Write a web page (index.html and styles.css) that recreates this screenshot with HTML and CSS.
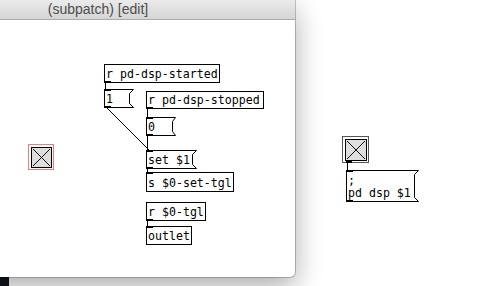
FILE: index.html
```html
<!DOCTYPE html>
<html lang="en">
  <head>
    <meta charset="UTF-8" />
    <meta name="viewport" content="width=device-width, initial-scale=1.0" />
    <title>pd patch</title>
    <link rel="stylesheet" href="styles.css">
  </head>
  <body>
    <div class="desktop">
      <!-- main patch canvas, sits behind the subpatch window -->
      <svg class="patch main-patch" width="477" height="286" viewBox="0 0 477 286">
        <rect class="tgl-frame" x="342.5" y="136.5" width="26" height="26" />
        <rect class="tgl" x="345.5" y="139.5" width="21" height="21" />
        <line class="tgl-x" x1="347" y1="141" x2="365" y2="159" />
        <line class="tgl-x" x1="365" y1="141" x2="347" y2="159" />
        <rect class="iolet" x="346" y="160" width="6" height="3" />

        <line class="cord" x1="347.5" y1="163" x2="347.5" y2="170" />

        <polygon class="box" points="346.5,170.5 418.5,170.5 414.5,174.5 414.5,197.5 418.5,201.5 346.5,201.5" />
        <text class="label" x="348" y="184">;</text>
        <text class="label" x="348" y="197">pd dsp $1</text>
        <rect class="iolet" x="346" y="170" width="7" height="2" />
        <rect class="iolet" x="346" y="200" width="7" height="2" />
      </svg>

      <div class="dock-tile"></div>

      <div class="window">
        <div class="titlebar">(subpatch) [edit]</div>
        <div class="canvas">
          <svg class="patch" width="394" height="257" viewBox="-99 20 394 257">
            <!-- cords -->
            <line class="cord" x1="105.5" y1="83" x2="105.5" y2="89" />
            <line class="cord" x1="107" y1="108" x2="149" y2="150" />
            <line class="cord" x1="147.5" y1="109" x2="147.5" y2="117" />
            <line class="cord" x1="147.5" y1="135" x2="147.5" y2="150" />
            <line class="cord" x1="147.5" y1="168" x2="147.5" y2="173" />
            <line class="cord" x1="147.5" y1="220" x2="147.5" y2="226" />

            <!-- r pd-dsp-started -->
            <rect class="box" x="104.5" y="64.5" width="115" height="18" />
            <text class="label" x="106" y="77.5">r pd-dsp-started</text>
            <rect class="iolet" x="104" y="81" width="7" height="2" />

            <!-- floatatom 1 -->
            <polygon class="box" points="104.5,89.5 133.5,89.5 129.5,93.5 129.5,103.5 133.5,107.5 104.5,107.5" />
            <text class="label" x="106" y="102.5">1</text>
            <rect class="iolet" x="104" y="89" width="7" height="2" />
            <rect class="iolet" x="104" y="106" width="7" height="2" />

            <!-- r pd-dsp-stopped -->
            <rect class="box" x="146.5" y="91.5" width="117" height="17" />
            <text class="label" x="148" y="104">r pd-dsp-stopped</text>
            <rect class="iolet" x="146" y="107" width="7" height="2" />

            <!-- floatatom 0 -->
            <polygon class="box" points="146.5,117.5 175.5,117.5 172.5,121.5 172.5,131.5 175.5,135.5 146.5,135.5" />
            <text class="label" x="148" y="130.5">0</text>
            <rect class="iolet" x="146" y="117" width="7" height="2" />
            <rect class="iolet" x="146" y="134" width="7" height="2" />

            <!-- set $1 -->
            <polygon class="box" points="146.5,150.5 196.5,150.5 192.5,154.5 192.5,164.5 196.5,168.5 146.5,168.5" />
            <text class="label" x="148" y="163.5">set $1</text>
            <rect class="iolet" x="146" y="150" width="7" height="2" />
            <rect class="iolet" x="146" y="167" width="7" height="2" />

            <!-- s $0-set-tgl -->
            <rect class="box" x="146.5" y="172.5" width="87" height="19" />
            <text class="label" x="148" y="186.5">s $0-set-tgl</text>
            <rect class="iolet" x="146" y="172" width="7" height="2" />

            <!-- r $0-tgl -->
            <rect class="box" x="146.5" y="202.5" width="59" height="18" />
            <text class="label" x="148" y="215.5">r $0-tgl</text>
            <rect class="iolet" x="146" y="219" width="7" height="2" />

            <!-- outlet -->
            <rect class="box" x="146.5" y="226.5" width="45" height="18" />
            <text class="label" x="148" y="239.5">outlet</text>
            <rect class="iolet" x="146" y="226" width="7" height="2" />

            <!-- selected toggle -->
            <rect class="selection" x="28.5" y="144.5" width="25" height="25" />
            <rect class="tgl" x="31.5" y="147.5" width="20" height="20" />
            <line class="tgl-x" x1="33" y1="149" x2="50" y2="166" />
            <line class="tgl-x" x1="50" y1="149" x2="33" y2="166" />
          </svg>
        </div>
      </div>
    </div>
  </body>
</html>
```

FILE: styles.css
```css
body {
  margin: 0;
  background: #fff;
  overflow: hidden;
}
.desktop {
  position: relative;
  width: 477px;
  height: 286px;
  overflow: hidden;
  background: #fff;
}
.main-patch {
  position: absolute;
  left: 0;
  top: 0;
}
.dock-tile {
  position: absolute;
  left: 0;
  top: 277px;
  width: 9px;
  height: 9px;
  background: #11161d;
}
.window {
  position: absolute;
  left: -99px;
  top: 0;
  width: 394px;
  height: 277px;
  background: #fff;
  border-radius: 0 0 5px 5px;
  overflow: hidden;
  box-shadow: 0 0 0 1px rgba(0, 0, 0, 0.22), 0 10px 28px rgba(0, 0, 0, 0.33);
}
.titlebar {
  height: 19px;
  line-height: 19px;
  border-bottom: 1px solid #ababab;
  background: linear-gradient(#ebebeb, #d5d5d5);
  text-align: center;
  font-family: "Liberation Sans", Arial, sans-serif;
  font-size: 14px;
  color: #4d4d4d;
}
.canvas {
  height: 257px;
}
.patch {
  display: block;
}
.box {
  fill: #fff;
  stroke: #000;
  stroke-width: 1;
}
.label {
  font-family: "DejaVu Sans Mono", monospace;
  font-size: 11.6px;
  fill: #000;
}
.iolet {
  fill: #000;
}
.cord {
  stroke: #000;
  stroke-width: 1;
}
.tgl {
  fill: #dedede;
  stroke: #000;
  stroke-width: 1;
}
.tgl-frame {
  fill: #fff;
  stroke: #555;
  stroke-width: 1;
}
.tgl-x {
  stroke: #111;
  stroke-width: 1;
}
.selection {
  fill: none;
  stroke: #f27a7a;
  stroke-width: 1;
}
```
